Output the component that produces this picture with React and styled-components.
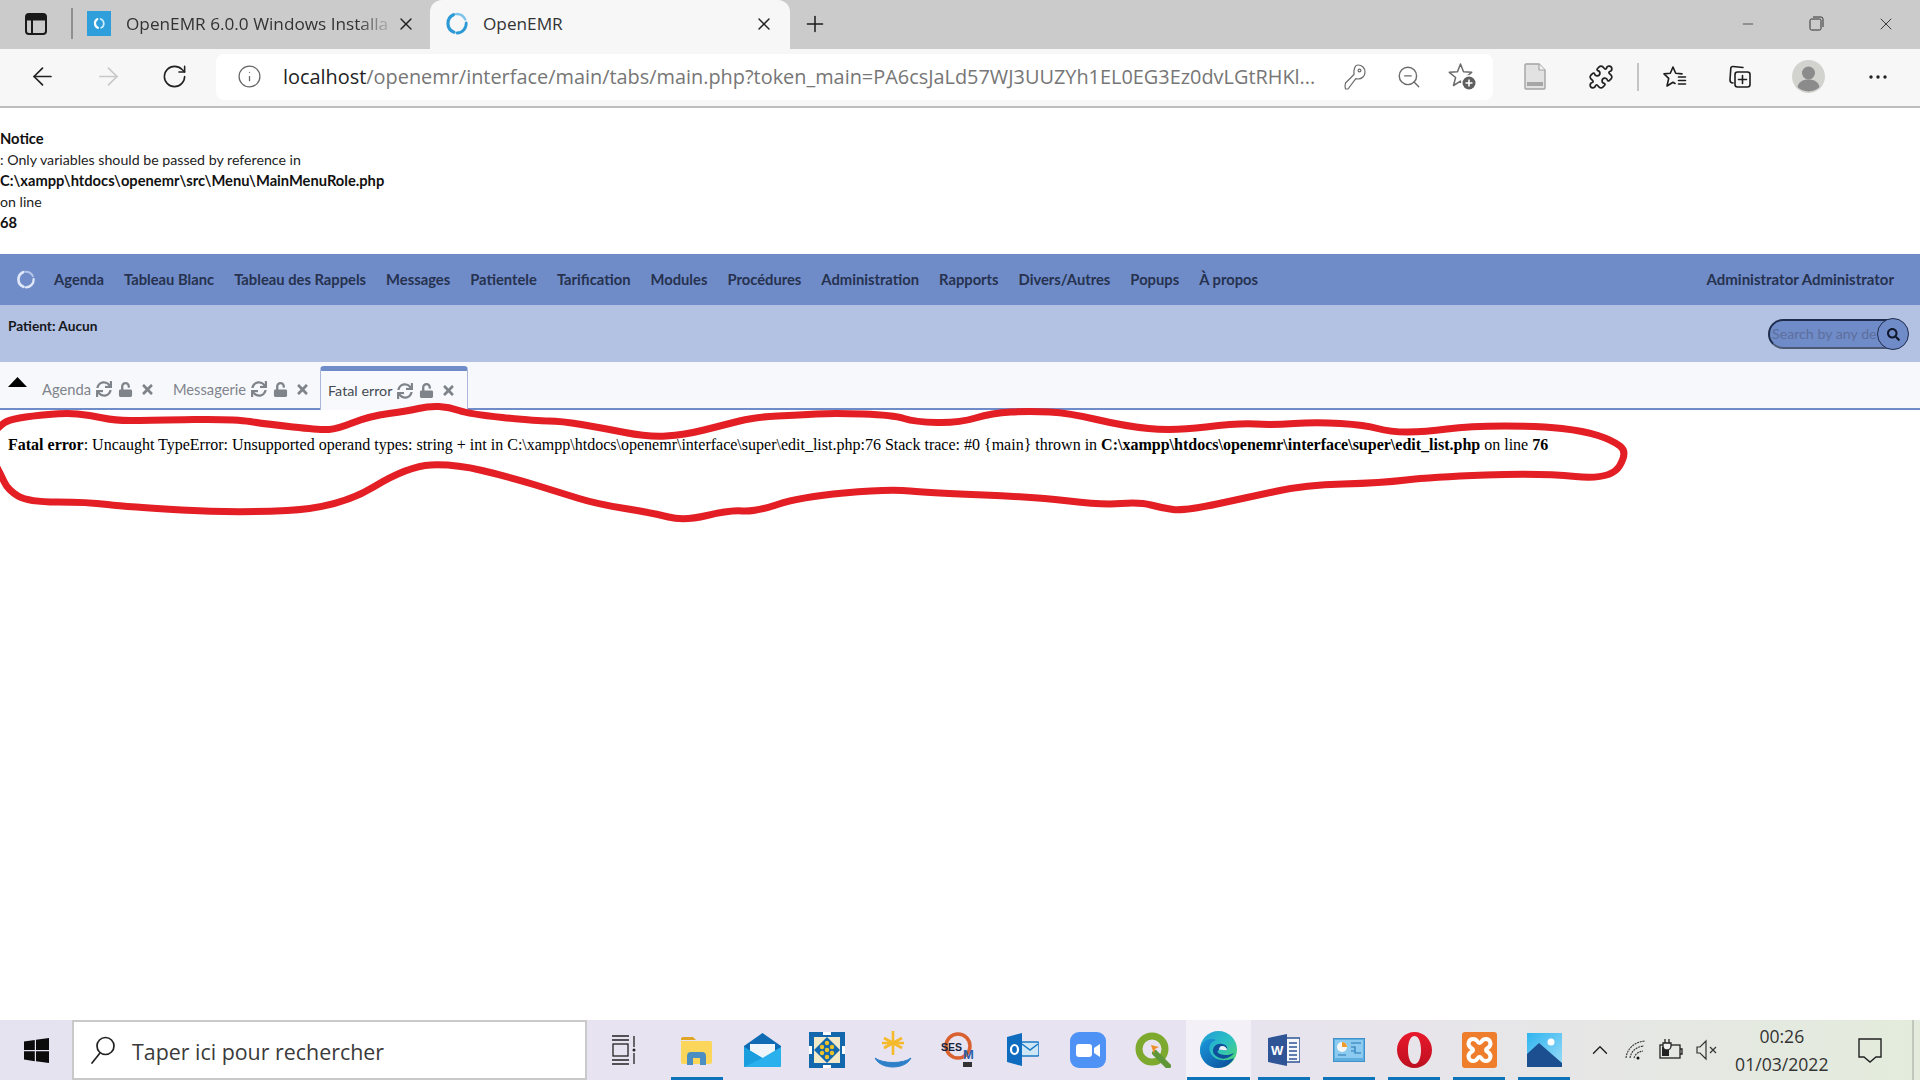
import React from "react";
import styled, { createGlobalStyle } from "styled-components";
import { ArrowLeft, ArrowRight, RotateCw, Info, ZoomOut, Puzzle, X, Plus, Minus, ChevronUp } from "lucide-react";
import { FaSync, FaUnlock, FaTimes, FaSearch } from "react-icons/fa";

const Global = createGlobalStyle`
  html, body { margin: 0; padding: 0; background: #fff; }
  * { box-sizing: border-box; }
`;

const UI = `"Open Sans", "Noto Sans", sans-serif`;
const APP = `Lato, "Open Sans", sans-serif`;

const Page = styled.div`
  position: relative; width: 1920px; height: 1080px; overflow: hidden;
  display: flex; flex-direction: column; background: #fff; font-family: ${APP};
`;

/* Browser chrome */
const TabStrip = styled.div`display: flex; align-items: stretch; height: 49px; background: #cbcbcb; flex: none;`;
const StripButton = styled.div`
  width: ${p => p.$w}px; display: flex; align-items: center; justify-content: center; color: #1c1c1c; flex: none;
  padding-bottom: 2px;
`;
const StripDivider = styled.div`width: 2px; height: 31px; background: #8f8f8f; align-self: center; flex: none; margin-bottom: 2px;`;
const BrowserTab = styled.div`
  display: flex; align-items: center; flex: none; width: ${p => p.$w}px; padding: 0 0 2px ${p => p.$pad}px;
  background: ${p => (p.$active ? "#f7f7f7" : "transparent")};
  border-radius: 12px 12px 0 0; color: #2b2b2b;
`;
const TabFavicon = styled.div`
  width: 24px; height: 25px; flex: none; display: flex; align-items: center; justify-content: center;
  background: ${p => (p.$boxed ? "#2f9fdb" : "transparent")};
`;
const TabTitle = styled.div`
  width: ${p => p.$w}px; margin-left: ${p => p.$gap}px; flex: none; white-space: nowrap;
  font: 17.2px/24px ${UI}; color: #333;
  ${p => p.$fade && "mask-image: linear-gradient(90deg, #000 88%, rgba(0,0,0,.25) 98%);"}
`;
const TabClose = styled.div`display: flex; align-items: center; justify-content: center; width: 20px; flex: none; margin-left: ${p => p.$gap}px; color: #222;`;
const WindowControls = styled.div`display: flex; margin-left: auto;`;

const NavBar = styled.div`
  display: flex; align-items: center; height: 59px; flex: none; padding: 0 0 2px 9px;
  background: #f7f7f7; border-bottom: 2px solid #bdbdbd;
`;
const NavSlot = styled.div`
  width: ${p => p.$w}px; height: 40px; flex: none; display: flex; align-items: center; justify-content: center;
  color: ${p => p.$c || "#222"};
`;
const AddressBar = styled.div`
  display: flex; align-items: center; width: 1277px; height: 46px; margin-left: 9px; margin-right: 9px; flex: none;
  background: #fff; border-radius: 8px; padding-left: 16px;
`;
const InfoSlot = styled.div`width: 34px; display: flex; justify-content: center; color: #666; flex: none;`;
const Url = styled.div`
  width: 1045px; margin-left: 17px; flex: none; white-space: nowrap; overflow: hidden;
  font: 19.9px/28px ${UI}; color: #767676;
  b { font-weight: 400; color: #222; }
`;
const AddrIcon = styled.div`
  width: ${p => p.$w}px; flex: none; display: flex; justify-content: center; color: #6b6b6b;
`;
const NavDivider = styled.div`width: 2px; height: 28px; background: #c4c4c4; margin: 0 3px 0 3px; flex: none;`;

/* PHP notice */
const Notice = styled.div`
  height: 146px; flex: none; padding-top: 20px;
  font: 400 14.2px/21px ${APP}; color: #222;
  div { height: 21px; white-space: nowrap; }
  strong { font-weight: 700; font-size: 14.7px; color: #111; }
`;

/* OpenEMR menu */
const MenuBar = styled.nav`
  display: flex; align-items: center; height: 51px; flex: none; padding: 0 26px 1px 16px;
  background: #6f8bc8;
`;
const MenuLogo = styled.div`width: 20px; height: 24px; margin-right: 18px; display: flex; align-items: center; flex: none;`;
const MenuList = styled.div`display: flex; gap: 20px;`;
const MenuItem = styled.span`font: 700 14.75px/20px ${APP}; color: #26324f; white-space: nowrap;`;
const UserName = styled(MenuItem)`margin-left: auto; font-size: 15px;`;

const PatientBar = styled.div`
  display: flex; height: 57px; flex: none; padding: 0 12px 0 8px; align-items: flex-start; justify-content: space-between;
  background: #b3c1e2;
`;
const PatientLabel = styled.div`font: 700 13.7px/20px ${APP}; color: #16181d; margin-top: 11px;`;
const SearchPill = styled.div`
  width: 140px; height: 30px; margin-top: 14px;
  background: #6f8bc8; border: 2px solid #1f2c4c; border-bottom-color: #4d5a75; border-radius: 15px;
  font: 400 14.2px/26px ${APP}; color: #5d6f9c; padding-left: 2px; white-space: nowrap;
`;
const PillWrap = styled.div`position: relative;`;
const SearchButton = styled.div`
  position: absolute; right: -1px; top: 13px; width: 32px; height: 32px; border-radius: 50%;
  background: #6f8bc8; border: 1.5px solid #1f2c4c; color: #10182c;
  display: flex; align-items: center; justify-content: center; font-size: 13px;
`;

const AppTabRow = styled.div`
  display: flex; align-items: flex-end; height: 48px; flex: none;
  background: #f7f8fb; border-bottom: 2px solid #6f8bc8;
`;
const CaretSlot = styled.div`display: flex; align-items: flex-start; width: 34px; height: 46px; padding: 15px 0 0 8px; flex: none;`;
const AppTab = styled.div`
  display: flex; align-items: center; height: ${p => (p.$active ? "44px" : "40px")};
  padding: ${p => (p.$active ? "0 11px 0 7px" : "2px 10px 0 8px")};
  margin-bottom: ${p => (p.$active ? "-2px" : "0")}; flex: none;
  background: ${p => (p.$active ? "#f7f9fd" : "transparent")};
  ${p => p.$active && "border: 1px solid #a9b8da; border-top: 5px solid #6f8bc8; border-bottom: 0; border-radius: 4px 4px 0 0;"}
  font: 400 ${p => (p.$active ? "14.3px" : "14.7px")}/20px ${APP}; color: ${p => (p.$active ? "#444a52" : "#80848c")};
`;
const TabLabel = styled.span`white-space: nowrap;`;
const TabAction = styled.span`
  display: inline-flex; margin-left: ${p => p.$gap}px; color: #7f848b; font-size: ${p => p.$size}px;
`;

const Content = styled.main`flex: 1; padding: 25px 0 0 8px; font: 400 16px/20px "Liberation Serif", serif; color: #000; white-space: nowrap;`;

/* Windows taskbar */
const Taskbar = styled.footer`
  display: flex; align-items: stretch; height: 60px; flex: none;
  background: linear-gradient(90deg, #e6e3f1 0%, #e8e3f0 62%, #e6e6e6 82%, #e3ecdc 100%);
`;
const StartButton = styled.div`width: 72px; display: flex; align-items: center; justify-content: center; flex: none;`;
const SearchBox = styled.div`
  width: 515px; flex: none; display: flex; align-items: center; background: #fff;
  border: 2px solid #c9c9c9; padding-left: 16px; color: #222;
`;
const SearchText = styled.span`font: 400 21.4px/30px ${UI}; color: #3a3a3a; margin: 4px 0 0 16px; white-space: nowrap;`;
const TaskView = styled.div`width: 74px; margin-right: 3.4px; flex: none; display: flex; align-items: center; justify-content: center;`;
const AppSlot = styled.div`
  position: relative; width: 65.2px; flex: none; display: flex; align-items: center; justify-content: center;
  padding-bottom: 1px;
  background: ${p => (p.$focus ? "#f3f0f7" : "transparent")};
  ${p => p.$running && `&::after {
    content: ""; position: absolute; bottom: 0; height: 3px; background: #0f73ba;
    left: ${p.$focus ? "1px" : "6.6px"}; right: ${p.$focus ? "1px" : "6.6px"};
  }`}
`;
const Tray = styled.div`display: flex; align-items: center; margin-left: 4.8px; flex: 1; color: #222;`;
const TraySlot = styled.div`width: ${p => p.$w}px; flex: none; display: flex; align-items: center; justify-content: center;`;
const Clock = styled.div`
  width: 112px; flex: none; text-align: center; font: 400 17.6px/28px ${UI}; color: #333;
`;
const TaskbarEdge = styled.div`width: 2px; height: 100%; background: #c2c7bd; margin-left: 10px;`;

const Overlay = styled.svg`position: absolute; left: 0; top: 0; pointer-events: none;`;

const Ring = ({ size = 24, a = "#2d9ad6", b = "#7cc4ec" }) => (
  <svg width={size} height={size} viewBox="0 0 24 24" fill="none">
    <path d="M8.500 3.200A9.500 9.500 0 0 0 9 20.700" stroke={a} strokeWidth="3.200" strokeLinecap="round" />
    <path d="M11 2.600A9.500 9.500 0 0 1 20.300 8" stroke={b} strokeWidth="2.400" strokeLinecap="round" />
    <path d="M21.200 11.500A9.500 9.500 0 0 1 12 21.500" stroke={a} strokeWidth="2.800" strokeLinecap="round" />
  </svg>
);
const BoxRing = () => (
  <svg width="13" height="13" viewBox="0 0 24 24" fill="none">
    <path d="M8 4A9 9 0 0 0 9 20" stroke="#fff" strokeWidth="4" strokeLinecap="round" />
    <path d="M14 3.500A9 9 0 0 1 15 20" stroke="#cfeeff" strokeWidth="3" strokeLinecap="round" />
  </svg>
);
const VerticalTabs = () => (
  <svg width="24" height="24" viewBox="0 0 24 24" fill="none" stroke="#1a1a1a">
    <rect x="2" y="2" width="20" height="20" rx="3" strokeWidth="2" />
    <path d="M2 5a3 3 0 0 1 3-3h14a3 3 0 0 1 3 3v3H2z" fill="#1a1a1a" />
    <path d="M8 8v14" strokeWidth="2" />
  </svg>
);
const Restore = () => (
  <svg width="15" height="15" viewBox="0 0 15 15" fill="none" stroke="#333" strokeWidth="1">
    <rect x="1" y="3" width="11" height="11" rx="1.500" />
    <path d="M4 1h8a2 2 0 0 1 2 2v8" />
  </svg>
);
const DocIcon = () => (
  <svg width="22" height="27" viewBox="0 0 22 27">
    <path d="M1 2a1 1 0 0 1 1-1h13l6 6v18a1 1 0 0 1-1 1H2a1 1 0 0 1-1-1z" fill="#e2e2e2" stroke="#a4a4a4" strokeWidth="1.400" />
    <path d="M15 1v6h6" fill="#f2f2f2" stroke="#a4a4a4" strokeWidth="1.200" />
    <rect x="3" y="19" width="16" height="4" fill="#a6a6a6" />
  </svg>
);
const KeyIcon = () => (
  <svg width="24" height="28" viewBox="0 0 24 28" fill="none" stroke="#6b6b6b" strokeWidth="1.200" strokeLinejoin="round">
    <path d="M15 2c4 0 7 3 7 7 0 4-3 7-7 7-.800 0-1.500-.100-2.200-.400L5 26l-2.500 0-.500-3 .500-3 8.500-8.500C10.500 6 12 2 15 2z" />
    <circle cx="16.500" cy="7.500" r="1.400" />
  </svg>
);
const FavAdd = () => (
  <svg width="30" height="30" viewBox="0 0 30 30" fill="none">
    <path d="M12.500 2l3 7.800 8.200.5-6.300 5.200 2.100 8-7-4.400-7 4.400 2.100-8-6.300-5.200 8.200-.5z" stroke="#6b6b6b" strokeWidth="1.500" strokeLinejoin="round" />
    <circle cx="21" cy="21" r="8" fill="#fff" />
    <circle cx="21" cy="21" r="6.500" fill="#5e5e5e" />
    <path d="M21 17.500v7M17.500 21h7" stroke="#fff" strokeWidth="1.600" />
  </svg>
);
const Favorites = () => (
  <svg width="26" height="26" viewBox="0 0 26 26" fill="none" stroke="#1d1d1d" strokeWidth="1.600" strokeLinejoin="round" strokeLinecap="round">
    <path d="M11 3l2.700 6.300 6.300.6M11 3 8.300 9.300l-6.300.6 4.700 4.500L5 22l6-3.700 2 1.200" />
    <path d="M16.500 13h7M16.500 16.500h7M16.500 20h7" />
  </svg>
);
const Collections = () => (
  <svg width="26" height="26" viewBox="0 0 26 26" fill="none" stroke="#1d1d1d" strokeWidth="1.600" strokeLinecap="round">
    <path d="M16 3.500 6 2.500a2 2 0 0 0-2.200 1.800L3 16a3 3 0 0 0 3 3" />
    <rect x="8" y="8" width="15" height="15" rx="2.500" />
    <path d="M15.500 11.500v8M11.500 15.500h8" />
  </svg>
);
const Avatar = () => (
  <svg width="33" height="33" viewBox="0 0 33 33">
    <circle cx="16.500" cy="16.500" r="16.500" fill="#d2d2ce" />
    <circle cx="16.500" cy="13" r="6.500" fill="#8b8b8b" />
    <path d="M5.500 27c1-5 5-7.500 11-7.500s10 2.500 11 7.500a16 16 0 0 1-22 0z" fill="#8b8b8b" />
  </svg>
);
const Dots = () => (
  <svg width="20" height="6" viewBox="0 0 20 6" fill="#222"><circle cx="3" cy="3" r="1.700" /><circle cx="10" cy="3" r="1.700" /><circle cx="17" cy="3" r="1.700" /></svg>
);
const Caret = () => (
  <svg width="19" height="10" viewBox="0 0 19 10"><path d="M9.500 0 19 10H0z" fill="#000" /></svg>
);
const WinLogo = () => (
  <svg width="25" height="25" viewBox="0 0 25 25" fill="#0c0c0c">
    <path d="M0 3.600 10.800 2v10H0zM12 1.800 25 0v12H12zM0 13.200h10.800v10L0 21.600zM12 13.200h13V25l-13-1.800z" />
  </svg>
);
const Magnifier = () => (
  <svg width="26" height="28" viewBox="0 0 26 28" fill="none" stroke="#222" strokeWidth="1.700" strokeLinecap="round">
    <ellipse cx="15.500" cy="10" rx="8.500" ry="8.500" />
    <path d="M10 17 2 27" />
  </svg>
);
const TaskViewIcon = () => (
  <svg width="26" height="30" viewBox="0 0 26 30" fill="none" stroke="#222" strokeWidth="1.300">
    <path d="M1 1h17M1 5h17M1 25h17M1 29h17" />
    <rect x="2" y="9" width="15" height="12" />
    <path d="M23 1v11M23 18v11" />
    <circle cx="23" cy="15" r="1.500" fill="#222" stroke="none" />
  </svg>
);
const Folder = () => (
  <svg width="33" height="32" viewBox="0 0 33 32">
    <path d="M1 5a2 2 0 0 1 2-2h10l3 3H1z" fill="#e0a526" />
    <path d="M1 7h29a2 2 0 0 1 2 2v19a2 2 0 0 1-2 2H3a2 2 0 0 1-2-2z" fill="#fbd65b" />
    <path d="M7 31v-9a4 4 0 0 1 4-4h11a4 4 0 0 1 4 4v9h-6v-7h-7v7z" fill="#4a8ec4" />
  </svg>
);
const Mail = () => (
  <svg width="37" height="34" viewBox="0 0 37 34">
    <path d="M0 13 18.500 0 37 13v19a2 2 0 0 1-2 2H2a2 2 0 0 1-2-2z" fill="#0f6cb4" />
    <path d="M6 11h25v10l-12.500 6L6 21z" fill="#eef6fb" />
    <path d="M0 14 18.500 25 37 14v18a2 2 0 0 1-2 2H2a2 2 0 0 1-2-2z" fill="#2ab0ec" />
    <path d="M0 14 18.500 25 0 34z" fill="#1a9ede" />
  </svg>
);
const Diamond = () => (
  <svg width="36" height="36" viewBox="0 0 36 36">
    <rect width="36" height="36" fill="#1368ad" />
    <rect x="5" y="5" width="26" height="26" fill="#f1e9c8" />
    <path d="M18 5 31 18 18 31 5 18z" fill="#1368ad" />
    <g fill="#ecc229">
      <circle cx="18" cy="11" r="2.200" /><circle cx="13" cy="15" r="2.200" /><circle cx="23" cy="15" r="2.200" />
      <circle cx="18" cy="18" r="2.200" /><circle cx="13" cy="21" r="2.200" /><circle cx="23" cy="21" r="2.200" /><circle cx="18" cy="25" r="2.200" />
    </g>
    <path d="M14 0h8v3h-8zM14 33h8v3h-8zM0 14h3v8H0zM33 14h3v8h-3z" fill="#fff" />
  </svg>
);
const Sun = () => (
  <svg width="38" height="37" viewBox="0 0 38 37" fill="none">
    <path d="M19 0v24M10 7l18 10M28 7 10 17M8 12h22" stroke="#f5b92c" strokeWidth="2.600" />
    <path d="M1 27c8 6 28 6 36 0-6 12-30 12-36 0z" fill="#2d80c8" stroke="#2d80c8" />
  </svg>
);
const Sesam = () => (
  <svg width="34" height="36" viewBox="0 0 34 36">
    <circle cx="17" cy="14" r="12" fill="none" stroke="#d9602f" strokeWidth="3.500" />
    <text x="0" y="19" fontFamily="Liberation Sans, sans-serif" fontWeight="700" fontSize="10.500" fill="#16223c">SES</text>
    <text x="22" y="27" fontFamily="Liberation Sans, sans-serif" fontWeight="700" fontSize="13" fill="#2b5fa8">M</text>
    <rect x="22" y="30" width="9" height="5" fill="#333" />
  </svg>
);
const Outlook = () => (
  <svg width="32" height="33" viewBox="0 0 32 33">
    <rect x="14" y="9" width="18" height="14" rx="1.500" fill="#cfe6f7" stroke="#1a79c4" strokeWidth="1.500" />
    <path d="M15 11l8 6 8-6" fill="none" stroke="#1a79c4" strokeWidth="1.500" />
    <path d="M0 4 15 0v33L0 29z" fill="#0f6cbf" />
    <ellipse cx="7.500" cy="16.500" rx="3.500" ry="4.500" fill="none" stroke="#fff" strokeWidth="2.200" />
  </svg>
);
const ZoomApp = () => (
  <svg width="36" height="36" viewBox="0 0 36 36">
    <rect width="36" height="36" rx="9" fill="#4f92f6" />
    <rect x="6" y="12" width="16" height="13" rx="3" fill="#fff" />
    <path d="M24 16l6-4v13l-6-4z" fill="#fff" />
  </svg>
);
const Qgis = () => (
  <svg width="36" height="36" viewBox="0 0 36 36" fill="none">
    <circle cx="17" cy="17" r="13" stroke="#7ea92f" strokeWidth="7" />
    <path d="M33 34 20 21" stroke="#5f9638" strokeWidth="6" strokeLinecap="round" />
    <path d="M16 13l8 2-4 2-1 5z" fill="#ef8f2a" />
  </svg>
);
const Edge = () => (
  <svg width="37" height="37" viewBox="0 0 37 37">
    <defs>
      <linearGradient id="eg" x1="0" y1="0" x2="1" y2="1">
        <stop offset="0" stopColor="#1f9ad8" /><stop offset=".5" stopColor="#2bc0c4" /><stop offset="1" stopColor="#58d65c" />
      </linearGradient>
      <linearGradient id="eb" x1="0" y1="0" x2="1" y2="1">
        <stop offset="0" stopColor="#1b9ade" /><stop offset="1" stopColor="#0a4a96" />
      </linearGradient>
    </defs>
    <circle cx="18.500" cy="18.500" r="18.500" fill="url(#eg)" />
    <path d="M0 19C1 9 10 6 16 9c-6 2-8 7-6 12 3 7 12 11 24 6-3 6-9 10-16 10C8 37 0 29 0 19z" fill="url(#eb)" />
    <path d="M13 20c0-5 4-8 9-7 4 .500 6 3 5 6-3 1-5-1-8 0-2 .800-2 3 1 4 5 2 10 1 14-1-3 4-9 7-14 5-4-1.500-7-4-7-7z" fill="#0f4f9c" />
    <path d="M19 19c3-1 5 1 8 0 0-2-2-4-5-4-2 0-3 2-3 4z" fill="#e9f2f6" />
  </svg>
);
const Word = () => (
  <svg width="32" height="32" viewBox="0 0 32 32">
    <rect x="12" y="4" width="20" height="24" fill="#f5f7fb" stroke="#2f5597" strokeWidth="1.500" />
    <path d="M21 9h8M21 13h8M21 17h8M21 21h8M21 25h8" stroke="#2f5597" strokeWidth="1.400" />
    <path d="M0 4 19 0v32L0 28z" fill="#2f5597" />
    <text x="3" y="21" fontFamily="Liberation Sans, sans-serif" fontWeight="700" fontSize="13" fill="#fff">W</text>
  </svg>
);
const Panel = () => (
  <svg width="32" height="24" viewBox="0 0 32 24">
    <rect width="32" height="24" fill="#5faee0" stroke="#2377b4" />
    <rect x="2" y="2" width="28" height="18" fill="#8ccbef" />
    <circle cx="9" cy="9" r="5" fill="#f5f5f5" />
    <path d="M9 9V4a5 5 0 0 1 5 5z" fill="#ee9b2b" />
    <path d="M18 5h10M18 9h4v6h6M18 13h3M5 17h8" stroke="#2377b4" fill="none" strokeWidth="1.200" />
  </svg>
);
const Opera = () => (
  <svg width="35" height="36" viewBox="0 0 35 36">
    <defs>
      <linearGradient id="op" x1="0" y1="0" x2="0" y2="1">
        <stop offset="0" stopColor="#e8192c" /><stop offset="1" stopColor="#bd0f1f" />
      </linearGradient>
    </defs>
    <path fillRule="evenodd" fill="url(#op)" d="M17.500 0C27 0 35 8 35 18s-8 18-17.500 18S0 28 0 18 8 0 17.500 0zM17.500 4C13.500 4 11 10 11 18s2.500 14 6.500 14S24 26 24 18 21.500 4 17.500 4z" />
  </svg>
);
const Xampp = () => (
  <svg width="35" height="36" viewBox="0 0 35 36" fill="none">
    <rect width="35" height="36" rx="3" fill="#ef7e2c" />
    <path d="M11 7c5 0 4 4 6.500 4S19 7 24 7c4 0 6 5 3 8-1.500 1.500-3 1.500-3 3s1.500 1.500 3 3c3 3 1 8-3 8-5 0-4-4-6.500-4S16 29 11 29c-4 0-6-5-3-8 1.500-1.500 3-1.500 3-3s-1.500-1.500-3-3c-3-3-1-8 3-8z" stroke="#fff" strokeWidth="4" />
  </svg>
);
const Photos = () => (
  <svg width="35" height="34" viewBox="0 0 35 34">
    <defs>
      <linearGradient id="ph" x1="0" y1="0" x2="1" y2="1">
        <stop offset="0" stopColor="#2fb4ef" /><stop offset="1" stopColor="#9bdcf8" />
      </linearGradient>
    </defs>
    <rect width="35" height="34" fill="url(#ph)" />
    <circle cx="24" cy="9" r="3.500" fill="#fff" />
    <path d="M0 21 12 10l23 20v4H0z" fill="#1b4f8f" />
  </svg>
);
const Wifi = () => (
  <svg width="22" height="22" viewBox="0 0 22 22" fill="none" stroke="#333" strokeWidth="1.100">
    <path d="M1 19C2 10 9 3 20 2M5 19c1-6 5-11 14-12M9 19c1-3 3-6 9-7" strokeDasharray="2 .800" />
    <circle cx="13" cy="19" r="1.500" fill="#111" stroke="none" />
  </svg>
);
const Battery = () => (
  <svg width="26" height="24" viewBox="0 0 26 24" fill="none" stroke="#222" strokeWidth="1.300">
    <rect x="2" y="7" width="20" height="13" />
    <path d="M22 11h2v5h-2" />
    <rect x="4" y="9" width="7" height="9" fill="#222" stroke="none" />
    <path d="M7 1v4M11 1v4M5 5h8v3a4 4 0 0 1-8 0z" fill="#f0f0f0" />
  </svg>
);
const Speaker = () => (
  <svg width="24" height="24" viewBox="0 0 24 24" fill="none" stroke="#333" strokeWidth="1.200">
    <path d="M2 9h3l6-6v18l-6-6H2z" />
    <path d="M15 9l6 6M21 9l-6 6" />
  </svg>
);
const Bubble = () => (
  <svg width="24" height="25" viewBox="0 0 24 25" fill="none" stroke="#222" strokeWidth="1.400">
    <path d="M1 1h22v18h-5l-6 5-6-5H1z" />
  </svg>
);

const POINTS = [[-6,432],[0,426],[8,420],[31,416],[66,413],[89,415],[117,421],[153,420],[235,419],[265,424],[321,430],[337,429],[370,416],[408,411],[429,406],[449,407],[469,414],[536,421],[561,421],[602,428],[648,437],[684,435],[724,425],[755,417],[800,415],[833,413],[893,415],[915,422],[959,423],[992,413],[1030,411],[1069,413],[1124,426],[1173,431],[1239,423],[1272,425],[1316,422],[1365,425],[1390,432],[1425,432],[1469,426],[1540,426],[1584,431],[1612,440],[1628,452],[1611,480],[1540,473],[1431,477],[1381,483],[1305,485],[1250,497],[1184,511],[1162,508],[1140,502],[1102,505],[1036,497],[932,493],[888,489],[800,497],[755,512],[730,510],[684,521],[653,513],[597,504],[561,493],[510,477],[454,464],[408,466],[339,508],[235,513],[128,507],[87,502],[28,502],[8,490],[0,473],[-6,462]];
const lasso = POINTS.reduce((d, [x, y], i) => {
  if (i === 0) return `M${x} ${y}`;
  const [nx, ny] = POINTS[i + 1] || [x, y];
  return `${d} Q${x} ${y} ${(x + nx) / 2} ${(y + ny) / 2}`;
}, "");

const MENU = ["Agenda", "Tableau Blanc", "Tableau des Rappels", "Messages", "Patientele", "Tarification", "Modules", "Procédures", "Administration", "Rapports", "Divers/Autres", "Popups", "À propos"];
const TABS = [["Agenda", false], ["Messagerie", false], ["Fatal error", true]];
const APPS = [
  [Folder, true, false], [Mail, false, false], [Diamond, false, false], [Sun, false, false], [Sesam, false, false],
  [Outlook, false, false], [ZoomApp, false, false], [Qgis, false, false], [Edge, true, true], [Word, true, false],
  [Panel, true, false], [Opera, true, false], [Xampp, true, false], [Photos, true, false],
];

export default function App() {
  return (
    <Page>
      <Global />
      <TabStrip>
        <StripButton $w={71}><VerticalTabs /></StripButton>
        <StripDivider />
        <BrowserTab $w={357} $pad={14}>
          <TabFavicon $boxed><BoxRing /></TabFavicon>
          <TabTitle $w={263} $gap={15} $fade>OpenEMR 6.0.0 Windows Installa</TabTitle>
          <TabClose $gap={7}><X size={20} strokeWidth={1.7} /></TabClose>
        </BrowserTab>
        <BrowserTab $active $w={360} $pad={15}>
          <TabFavicon><Ring size={25} /></TabFavicon>
          <TabTitle $w={261} $gap={14}>OpenEMR</TabTitle>
          <TabClose $gap={10}><X size={20} strokeWidth={1.7} /></TabClose>
        </BrowserTab>
        <StripButton $w={50}><Plus size={26} strokeWidth={1.4} /></StripButton>
        <WindowControls>
          <StripButton $w={69}><Minus size={16} strokeWidth={1} /></StripButton>
          <StripButton $w={69}><Restore /></StripButton>
          <StripButton $w={69}><X size={20} strokeWidth={1} /></StripButton>
        </WindowControls>
      </TabStrip>

      <NavBar>
        <NavSlot $w={66}><ArrowLeft size={29} strokeWidth={1.4} /></NavSlot>
        <NavSlot $w={66} $c="#c8c8c8"><ArrowRight size={29} strokeWidth={1.4} /></NavSlot>
        <NavSlot $w={66}><RotateCw size={27} strokeWidth={1.4} /></NavSlot>
        <AddressBar>
          <InfoSlot><Info size={25} strokeWidth={1.2} /></InfoSlot>
          <Url><b>localhost</b>/openemr/interface/main/tabs/main.php?token_main=PA6csJaLd57WJ3UUZYh1EL0EG3Ez0dvLGtRHKl...</Url>
          <AddrIcon $w={54}><KeyIcon /></AddrIcon>
          <AddrIcon $w={54}><ZoomOut size={26} strokeWidth={1.3} /></AddrIcon>
          <AddrIcon $w={54}><FavAdd /></AddrIcon>
        </AddressBar>
        <NavSlot $w={66}><DocIcon /></NavSlot>
        <NavSlot $w={66}><Puzzle size={26} strokeWidth={1.6} /></NavSlot>
        <NavDivider />
        <NavSlot $w={66}><Favorites /></NavSlot>
        <NavSlot $w={64}><Collections /></NavSlot>
        <NavSlot $w={72}><Avatar /></NavSlot>
        <NavSlot $w={68}><Dots /></NavSlot>
      </NavBar>

      <Notice>
        <div><strong>Notice</strong></div>
        <div>: Only variables should be passed by reference in</div>
        <div><strong>C:\xampp\htdocs\openemr\src\Menu\MainMenuRole.php</strong></div>
        <div>on line</div>
        <div><strong>68</strong></div>
      </Notice>

      <MenuBar>
        <MenuLogo><Ring size={21} a="#dfe8f8" b="#b4c6e8" /></MenuLogo>
        <MenuList>{MENU.map(m => <MenuItem key={m}>{m}</MenuItem>)}</MenuList>
        <UserName>Administrator Administrator</UserName>
      </MenuBar>

      <PatientBar>
        <PatientLabel>Patient: Aucun</PatientLabel>
        <PillWrap>
          <SearchPill>Search by any de</SearchPill>
          <SearchButton><FaSearch /></SearchButton>
        </PillWrap>
      </PatientBar>

      <AppTabRow>
        <CaretSlot><Caret /></CaretSlot>
        {TABS.map(([label, active]) => (
          <AppTab key={label} $active={active}>
            <TabLabel>{label}</TabLabel>
            <TabAction $gap={5} $size={16}><FaSync /></TabAction>
            <TabAction $gap={6} $size={15}><FaUnlock /></TabAction>
            <TabAction $gap={7} $size={15}><FaTimes /></TabAction>
          </AppTab>
        ))}
      </AppTabRow>

      <Content>
        <b>Fatal error</b>: Uncaught TypeError: Unsupported operand types: string + int in C:\xampp\htdocs\openemr\interface\super\edit_list.php:76 Stack trace: #0 {"{main}"} thrown in <b>C:\xampp\htdocs\openemr\interface\super\edit_list.php</b> on line <b>76</b>
      </Content>

      <Taskbar>
        <StartButton><WinLogo /></StartButton>
        <SearchBox>
          <Magnifier />
          <SearchText>Taper ici pour rechercher</SearchText>
        </SearchBox>
        <TaskView><TaskViewIcon /></TaskView>
        {APPS.map(([Icon, running, focus], i) => (
          <AppSlot key={i} $running={running} $focus={focus}><Icon /></AppSlot>
        ))}
        <Tray>
          <TraySlot $w={36}><ChevronUp size={26} strokeWidth={1.3} /></TraySlot>
          <TraySlot $w={36}><Wifi /></TraySlot>
          <TraySlot $w={34}><Battery /></TraySlot>
          <TraySlot $w={38}><Speaker /></TraySlot>
          <Clock>00:26<br />01/03/2022</Clock>
          <TraySlot $w={64}><Bubble /></TraySlot>
          <TaskbarEdge />
        </Tray>
      </Taskbar>

      <Overlay width="1920" height="1080" viewBox="0 0 1920 1080" fill="none">
        <path d={lasso} stroke="#e31e24" strokeWidth="7" strokeLinecap="round" strokeLinejoin="round" />
      </Overlay>
    </Page>
  );
}
